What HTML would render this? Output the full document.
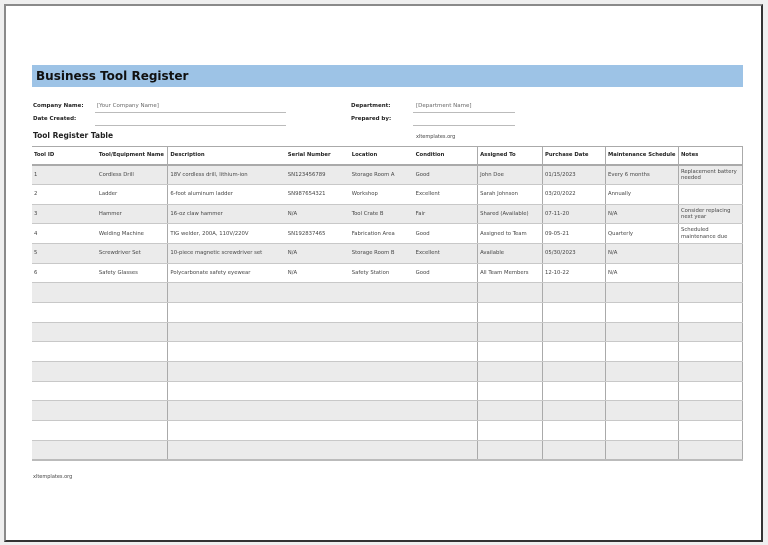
<!DOCTYPE html>
<html><head><meta charset="utf-8"><style>
*{margin:0;padding:0;box-sizing:border-box}
body{width:768px;height:545px;background:#efefef;position:relative;overflow:hidden;font-family:"DejaVu Sans","Liberation Sans",sans-serif;color:#222}
.page{position:absolute;left:4px;top:4px;width:759px;height:538px;background:#fff;border-left:2px solid #8a8a8a;border-top:2px solid #8a8a8a;border-right:2px solid #333;border-bottom:2px solid #333}
.a{position:absolute;white-space:nowrap}
.title{left:32px;top:65px;width:711px;height:22px;background:#9dc3e6;font-weight:bold;font-size:12px;padding-left:4px;line-height:22px;color:#111}
.lab{font-size:5.5px;font-weight:bold}
.val{font-size:5.5px;color:#666}
.ul{position:absolute;height:1px;background:#bbb}
table{position:absolute;left:32px;top:146px;width:711px;border-collapse:collapse;font-size:5.3px;color:#444}
td,th{height:19.67px;padding:0 2px;text-align:left;white-space:nowrap;overflow:hidden;line-height:6.5px}
th{color:#222;font-weight:bold;height:18.5px;border-top:1px solid #aaa;border-bottom:2px solid #aaa}
tr.g td{background:#ebebeb}
td{border-bottom:1px solid #c8c8c8}
.v{border-left:1px solid #aaa}
.r{border-right:1px solid #aaa}
.n{white-space:normal}
</style></head><body>
<div class="page"></div>
<div class="a title">Business Tool Register</div>
<div class="a lab" style="left:33px;top:103px">Company Name:</div>
<div class="a val" style="left:97px;top:103px">[Your Company Name]</div>
<div class="ul" style="left:95px;top:112px;width:191px"></div>
<div class="a lab" style="left:33px;top:116px">Date Created:</div>
<div class="ul" style="left:95px;top:125px;width:191px"></div>
<div class="a lab" style="left:351px;top:103px">Department:</div>
<div class="a val" style="left:416px;top:103px">[Department Name]</div>
<div class="ul" style="left:413px;top:112px;width:102px"></div>
<div class="a lab" style="left:351px;top:116px">Prepared by:</div>
<div class="ul" style="left:413px;top:125px;width:102px"></div>
<div class="a" style="left:33px;top:131px;font-size:7.5px;font-weight:bold">Tool Register Table</div>
<div class="a val" style="left:416px;top:134px;font-size:5px;color:#444">xltemplates.org</div>
<table>
<colgroup><col style="width:65px"><col style="width:71px"><col style="width:118px"><col style="width:64px"><col style="width:64px"><col style="width:64px"><col style="width:65px"><col style="width:63px"><col style="width:73px"><col style="width:64px"></colgroup>
<tr><th>Tool ID</th><th>Tool/Equipment Name</th><th class="v">Description</th><th>Serial Number</th><th>Location</th><th>Condition</th><th class="v">Assigned To</th><th class="v">Purchase Date</th><th class="v">Maintenance Schedule</th><th class="v r">Notes</th></tr>
<tr class="g"><td>1</td><td>Cordless Drill</td><td class="v">18V cordless drill, lithium-ion</td><td>SN123456789</td><td>Storage Room A</td><td>Good</td><td class="v">John Doe</td><td class="v">01/15/2023</td><td class="v">Every 6 months</td><td class="v r n">Replacement battery needed</td></tr>
<tr><td>2</td><td>Ladder</td><td class="v">6-foot aluminum ladder</td><td>SN987654321</td><td>Workshop</td><td>Excellent</td><td class="v">Sarah Johnson</td><td class="v">03/20/2022</td><td class="v">Annually</td><td class="v r"></td></tr>
<tr class="g"><td>3</td><td>Hammer</td><td class="v">16-oz claw hammer</td><td>N/A</td><td>Tool Crate B</td><td>Fair</td><td class="v">Shared (Available)</td><td class="v">07-11-20</td><td class="v">N/A</td><td class="v r n">Consider replacing next year</td></tr>
<tr><td>4</td><td>Welding Machine</td><td class="v">TIG welder, 200A, 110V/220V</td><td>SN192837465</td><td>Fabrication Area</td><td>Good</td><td class="v">Assigned to Team</td><td class="v">09-05-21</td><td class="v">Quarterly</td><td class="v r n">Scheduled maintenance due</td></tr>
<tr class="g"><td>5</td><td>Screwdriver Set</td><td class="v">10-piece magnetic screwdriver set</td><td>N/A</td><td>Storage Room B</td><td>Excellent</td><td class="v">Available</td><td class="v">05/30/2023</td><td class="v">N/A</td><td class="v r"></td></tr>
<tr><td>6</td><td>Safety Glasses</td><td class="v">Polycarbonate safety eyewear</td><td>N/A</td><td>Safety Station</td><td>Good</td><td class="v">All Team Members</td><td class="v">12-10-22</td><td class="v">N/A</td><td class="v r"></td></tr>
<tr class="g"><td></td><td></td><td class="v"></td><td></td><td></td><td></td><td class="v"></td><td class="v"></td><td class="v"></td><td class="v r"></td></tr>
<tr><td></td><td></td><td class="v"></td><td></td><td></td><td></td><td class="v"></td><td class="v"></td><td class="v"></td><td class="v r"></td></tr>
<tr class="g"><td></td><td></td><td class="v"></td><td></td><td></td><td></td><td class="v"></td><td class="v"></td><td class="v"></td><td class="v r"></td></tr>
<tr><td></td><td></td><td class="v"></td><td></td><td></td><td></td><td class="v"></td><td class="v"></td><td class="v"></td><td class="v r"></td></tr>
<tr class="g"><td></td><td></td><td class="v"></td><td></td><td></td><td></td><td class="v"></td><td class="v"></td><td class="v"></td><td class="v r"></td></tr>
<tr><td></td><td></td><td class="v"></td><td></td><td></td><td></td><td class="v"></td><td class="v"></td><td class="v"></td><td class="v r"></td></tr>
<tr class="g"><td></td><td></td><td class="v"></td><td></td><td></td><td></td><td class="v"></td><td class="v"></td><td class="v"></td><td class="v r"></td></tr>
<tr><td></td><td></td><td class="v"></td><td></td><td></td><td></td><td class="v"></td><td class="v"></td><td class="v"></td><td class="v r"></td></tr>
<tr class="g"><td style="border-bottom:2px solid #bbb"></td><td style="border-bottom:2px solid #bbb"></td><td class="v" style="border-bottom:2px solid #bbb"></td><td style="border-bottom:2px solid #bbb"></td><td style="border-bottom:2px solid #bbb"></td><td style="border-bottom:2px solid #bbb"></td><td class="v" style="border-bottom:2px solid #bbb"></td><td class="v" style="border-bottom:2px solid #bbb"></td><td class="v" style="border-bottom:2px solid #bbb"></td><td class="v r" style="border-bottom:2px solid #bbb"></td></tr>
</table>
<div class="a val" style="left:33px;top:474px;font-size:5px;color:#444">xltemplates.org</div>
</body></html>
